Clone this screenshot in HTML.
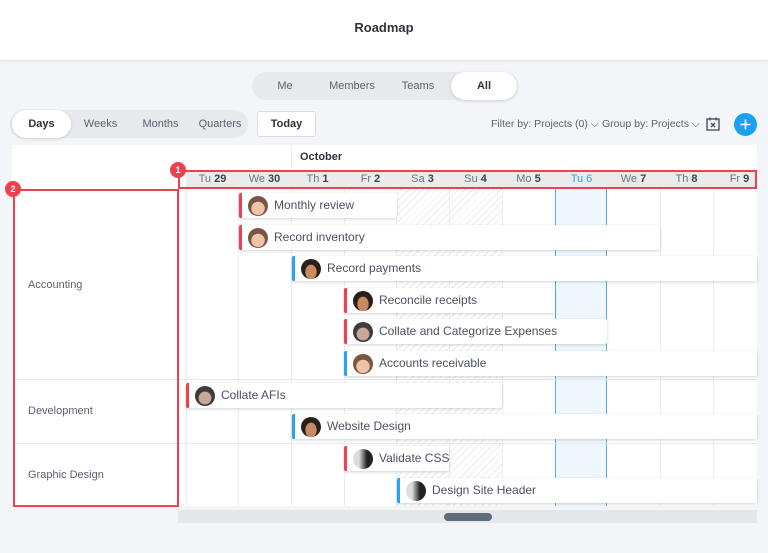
<!DOCTYPE html>
<html><head><meta charset="utf-8"><style>
*{box-sizing:border-box;margin:0;padding:0}
body{width:768px;height:553px;overflow:hidden;background:#f3f5f8;font-family:"Liberation Sans",sans-serif;position:relative;color:#3c4350}
.a{position:absolute}
.hdr{left:0;top:0;width:768px;height:61px;background:#fff;border-bottom:1px solid #e3e6ea;box-shadow:0 1px 3px rgba(0,0,0,.05)}
.pill{background:#e7e9ec;border-radius:15px}
.tab{font-size:11px;color:#5a6270;text-align:center}
.act{background:#fff;border-radius:15px;box-shadow:0 1px 3px rgba(0,0,0,.15);color:#2e333b;font-weight:bold}
.grid{left:12px;top:145px;width:745px;height:361px;background:#fff}
.vl{width:1px;background:#ebedf0;top:189px;height:317px}
.hl{height:1px;background:#e6e8eb;left:12px;width:745px}
.dh{top:170px;height:19px;font-size:11px;color:#6b7280;text-align:center;line-height:19px;width:53px}
.dh b{color:#3c4350}
.bar{height:25px;background:#fff;box-shadow:0 1px 3px rgba(0,0,0,.18);border-radius:2px;font-size:12px;color:#4a5160;line-height:25px;padding-left:32px;white-space:nowrap;overflow:hidden}
.bar.r{border-left:3px solid #f0404f}.bar.b{border-left:3px solid #2aa3ef}
.av{position:absolute;left:6px;top:2.5px;width:20px;height:20px;border-radius:50%}
.f{background:radial-gradient(circle at 50% 62%,#efc3a5 0 40%,#7a5542 44%)}
.m{background:radial-gradient(ellipse at 50% 65%,#c88a63 0 38%,#2a1f1a 42%);background-color:#2a1f1a}
.g{background:radial-gradient(circle at 50% 60%,#c9a999 0 38%,#3e3c3c 44%)}
.k{background:linear-gradient(90deg,#ddd 0 30%,#222 70%)}
.lab{font-size:11px;color:#5b6370;left:28px}
.hat{background:repeating-linear-gradient(135deg,#fff 0 4px,#e9ebee 4px 5px)}
</style></head><body>
<div class="a hdr"></div>
<div class="a" style="left:0;top:20px;width:768px;text-align:center;font-size:13px;font-weight:bold;color:#2e333b">Roadmap</div>

<div class="a pill" style="left:252px;top:72px;width:266px;height:28px"></div>
<div class="a tab" style="left:265px;top:80px;width:40px">Me</div>
<div class="a tab" style="left:322px;top:80px;width:60px">Members</div>
<div class="a tab" style="left:393px;top:80px;width:50px">Teams</div>
<div class="a tab act" style="left:451px;top:72px;width:66px;height:28px;line-height:28px">All</div>

<div class="a pill" style="left:10px;top:110px;width:238px;height:28px"></div>
<div class="a tab act" style="left:12px;top:110px;width:59px;height:28px;line-height:28px">Days</div>
<div class="a tab" style="left:78px;top:118px;width:45px">Weeks</div>
<div class="a tab" style="left:138px;top:118px;width:45px">Months</div>
<div class="a tab" style="left:195px;top:118px;width:50px">Quarters</div>
<div class="a" style="left:257px;top:111px;width:59px;height:26px;background:#fff;border:1px solid #d9dce1;border-radius:3px;font-size:11px;font-weight:bold;text-align:center;line-height:24px;color:#2e333b">Today</div>

<div class="a" style="left:491px;top:118px;font-size:10.5px;color:#5a6270">Filter by: Projects (0) ⌵</div>
<div class="a" style="left:602px;top:118px;font-size:10.5px;color:#5a6270">Group by: Projects ⌵</div>
<svg class="a" style="left:705px;top:116px" width="16" height="16" viewBox="0 0 16 16"><rect x="2" y="3" width="12" height="11" fill="none" stroke="#4a5160" stroke-width="1.4"/><path d="M5 1.5v3M11 1.5v3M6 7l4 4M10 7l-4 4" stroke="#4a5160" stroke-width="1.4"/></svg>
<div class="a" style="left:734px;top:113px;width:23px;height:23px;border-radius:50%;background:#1aa1f0"></div>
<svg class="a" style="left:734px;top:113px" width="23" height="23"><path d="M11.5 6.5v10M6.5 11.5h10" stroke="#fff" stroke-width="1.6"/></svg>

<div class="a grid"></div>
<div class="a" style="left:291px;top:145px;width:1px;height:25px;background:#ebedf0"></div>
<div class="a" style="left:300px;top:151px;font-size:11px;font-weight:bold;color:#2e333b">October</div>
<div class="a" style="left:186px;top:170px;width:571px;height:19px;background:#ebebeb"></div>

<div class="a hat" style="left:396px;top:189px;width:106px;height:317px"></div>
<div class="a" style="left:555px;top:189px;width:52px;height:317px;background:#eef7fe;border-left:1px solid #4eb2ea;border-right:1px solid #4eb2ea"></div>

<div class="a vl" style="left:186px"></div><div class="a vl" style="left:238px"></div><div class="a vl" style="left:291px"></div><div class="a vl" style="left:344px"></div><div class="a vl" style="left:396px"></div><div class="a vl" style="left:449px"></div><div class="a vl" style="left:502px"></div><div class="a vl" style="left:660px"></div><div class="a vl" style="left:713px"></div>
<div class="a hl" style="top:379px"></div><div class="a hl" style="top:443px"></div>

<div class="a dh" style="left:186px">Tu <b>29</b></div>
<div class="a dh" style="left:238px">We <b>30</b></div>
<div class="a dh" style="left:291px">Th <b>1</b></div>
<div class="a dh" style="left:344px">Fr <b>2</b></div>
<div class="a dh" style="left:396px">Sa <b>3</b></div>
<div class="a dh" style="left:449px">Su <b>4</b></div>
<div class="a dh" style="left:502px">Mo <b>5</b></div>
<div class="a dh" style="left:555px;color:#2aa3ef">Tu 6</div>
<div class="a dh" style="left:607px">We <b>7</b></div>
<div class="a dh" style="left:660px">Th <b>8</b></div>
<div class="a dh" style="left:713px">Fr <b>9</b></div>

<div class="a lab" style="top:279px">Accounting</div>
<div class="a lab" style="top:405px">Development</div>
<div class="a lab" style="top:469px">Graphic Design</div>

<div class="a bar r" style="left:239px;top:193px;width:158px"><i class="av f"></i>Monthly review</div>
<div class="a bar r" style="left:239px;top:225px;width:421px"><i class="av f"></i>Record inventory</div>
<div class="a bar b" style="left:292px;top:256px;width:465px"><i class="av m"></i>Record payments</div>
<div class="a bar r" style="left:344px;top:288px;width:211px"><i class="av m"></i>Reconcile receipts</div>
<div class="a bar r" style="left:344px;top:319px;width:263px"><i class="av g"></i>Collate and Categorize Expenses</div>
<div class="a bar b" style="left:344px;top:351px;width:413px"><i class="av f"></i>Accounts receivable</div>
<div class="a bar r" style="left:186px;top:383px;width:316px"><i class="av g"></i>Collate AFIs</div>
<div class="a bar b" style="left:292px;top:414px;width:465px"><i class="av m"></i>Website Design</div>
<div class="a bar r" style="left:344px;top:446px;width:105px"><i class="av k"></i>Validate CSS</div>
<div class="a bar b" style="left:397px;top:478px;width:360px"><i class="av k"></i>Design Site Header</div>

<div class="a" style="left:178px;top:170px;width:579px;height:19px;border:2px solid #f0404f"></div>
<div class="a" style="left:13px;top:189px;width:166px;height:318px;border:2px solid #f0404f"></div>
<div class="a" style="left:170px;top:162px;width:16px;height:16px;border-radius:50%;background:#f0404f;color:#fff;font-size:9px;font-weight:bold;text-align:center;line-height:16px">1</div>
<div class="a" style="left:5px;top:181px;width:16px;height:16px;border-radius:50%;background:#f0404f;color:#fff;font-size:9px;font-weight:bold;text-align:center;line-height:16px">2</div>

<div class="a" style="left:178px;top:510px;width:579px;height:13px;background:#e4e6ea"></div>
<div class="a" style="left:444px;top:513px;width:48px;height:8px;border-radius:4px;background:#5f6b7a"></div>
</body></html>
